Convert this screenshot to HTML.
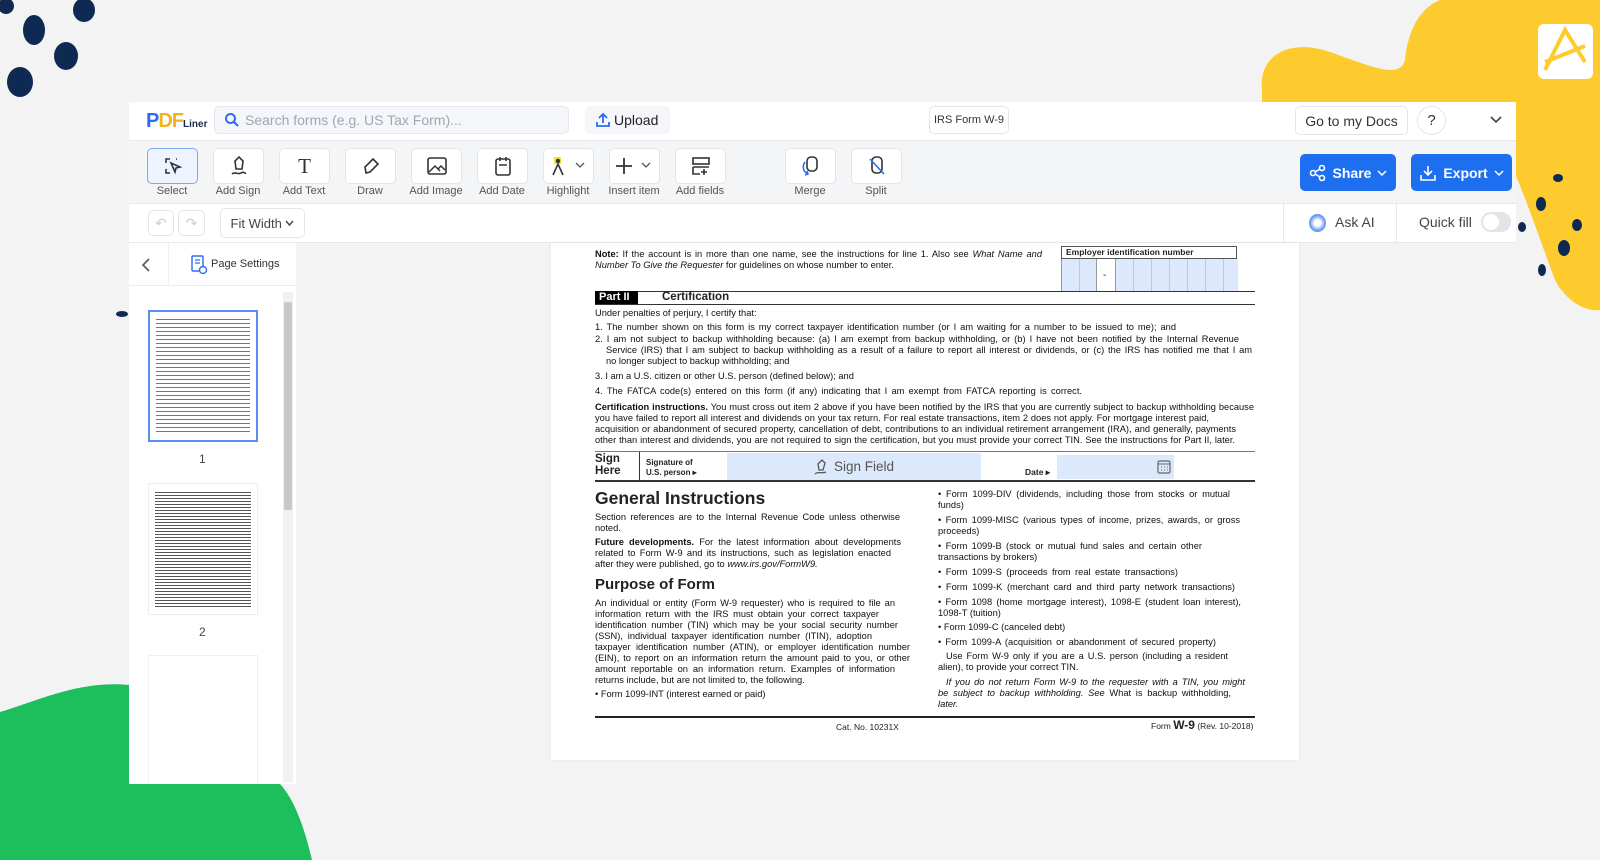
<!DOCTYPE html>
<html><head><meta charset="utf-8"><style>
*{box-sizing:border-box;margin:0;padding:0}
body{width:1600px;height:860px;overflow:hidden;background:#f3f3f4;font-family:"Liberation Sans",sans-serif;position:relative;color:#222}
.a{position:absolute}
.d{position:absolute;font-size:9.3px;line-height:11px;white-space:nowrap;color:#111}
.d div{height:11px}
.j{white-space:normal;text-align:justify;text-align-last:justify}
.tb{position:absolute;top:148px;width:51px;height:36px;border:1px solid #e3e5ea;border-radius:5px;background:#fff;display:flex;align-items:center;justify-content:center}
.tl{position:absolute;top:185px;width:80px;text-align:center;font-size:11px;color:#555}
.btn{position:absolute;border:1px solid #e3e5ea;border-radius:5px;background:#fff;display:flex;align-items:center;justify-content:center;color:#333}
b{font-weight:bold}
</style></head><body>
<svg class="a" style="left:0;top:0" width="1600" height="860">
<path d="M1262 90 C1258 55 1290 38 1330 52 C1370 66 1400 80 1405 60 C1408 30 1420 8 1440 0 L1600 0 L1600 310 C1585 312 1565 300 1555 280 C1540 240 1520 180 1500 140 L1262 110 Z" fill="#fdcb2e"/>
<rect x="1538" y="24" width="55" height="55" rx="6" fill="#fff"/>
<path d="M1545 70 L1565 30 L1585 62 M1545 62 L1585 46" stroke="#fdcb2e" stroke-width="4" fill="none"/>
<path d="M0 712 C40 700 80 680 130 685 L130 784 L280 784 C295 800 305 830 312 860 L0 860 Z" fill="#1dbf5c"/>
<g fill="#0e2a52">
<ellipse cx="34" cy="30" rx="11" ry="15"/><ellipse cx="84" cy="10" rx="11" ry="12"/><ellipse cx="66" cy="56" rx="12" ry="14"/><ellipse cx="20" cy="82" rx="13" ry="15"/><ellipse cx="6" cy="6" rx="8" ry="8"/>
<ellipse cx="1558" cy="178" rx="5" ry="4"/><ellipse cx="1541" cy="204" rx="5" ry="7"/><ellipse cx="1577" cy="225" rx="5" ry="6"/><ellipse cx="1564" cy="248" rx="6" ry="8"/><ellipse cx="1542" cy="270" rx="4" ry="6"/><ellipse cx="1522" cy="227" rx="4" ry="5"/><ellipse cx="122" cy="314" rx="6" ry="3"/>
</g>
</svg>
<div class="a" style="left:129px;top:102px;width:1387px;height:39px;background:#fff;border-bottom:1px solid #e8e9ec"></div>
<div class="a" style="left:146px;top:110px;font-size:20px;font-weight:bold;color:#2a6df4;letter-spacing:-1px">P<span style="color:#f5b21a">D</span><span style="color:#f5b21a">F</span><span style="font-size:10px;color:#1c2b4a;letter-spacing:0">Liner</span></div>
<div class="a" style="left:214px;top:106px;width:355px;height:28px;background:#f4f6fa;border:1px solid #e3e7ee;border-radius:5px"></div>
<svg class="a" style="left:224px;top:112px" width="16" height="16"><circle cx="6.5" cy="6.5" r="4.5" stroke="#2a6df4" stroke-width="2" fill="none"/><path d="M10 10 L14 14" stroke="#2a6df4" stroke-width="2"/></svg>
<div class="a" style="left:245px;top:112px;font-size:14px;color:#a0a6b2">Search forms (e.g. US Tax Form)...</div>
<div class="a" style="left:585px;top:106px;width:85px;height:28px;background:#f4f6fa;border-radius:5px"></div>
<svg class="a" style="left:594px;top:111px" width="18" height="18"><path d="M9 12 V3 M5 7 L9 3 L13 7 M3 11 V15 H15 V11" stroke="#2a6df4" stroke-width="1.8" fill="none"/></svg>
<div class="a" style="left:614px;top:112px;font-size:14px;color:#222">Upload</div>
<div class="btn" style="left:929px;top:106px;width:80px;height:28px;font-size:11px">IRS Form W-9</div>
<div class="btn" style="left:1295px;top:106px;width:113px;height:29px;font-size:14px">Go to my Docs</div>
<div class="btn" style="left:1417px;top:106px;width:29px;height:29px;border-radius:50%;font-size:15px">?</div>
<svg class="a" style="left:1489px;top:115px" width="14" height="10"><path d="M2 2 L7 7 L12 2" stroke="#444" stroke-width="1.6" fill="none"/></svg>
<div class="a" style="left:129px;top:141px;width:1387px;height:63px;background:#f4f5f7;border-bottom:1px solid #e8e9ec"></div>
<div class="tb" style="left:147px;border-color:#7fa6f0;background:#eef4ff"><svg width="20" height="20"><path d="M3 7V3h4M3 13v4h4M14 3h-1" stroke="#333" stroke-width="1.6" fill="none"/><path d="M8 7 L17 11 L13 12 L12 16 Z" stroke="#333" stroke-width="1.6" fill="none"/></svg></div>
<div class="tb" style="left:213px"><svg width="20" height="22"><path d="M7 14 L6 6 L10 2 L14 6 L13 14 Z M3 19 C6 16 9 20 12 18 S16 19 17 18" stroke="#333" stroke-width="1.6" fill="none"/></svg></div>
<div class="tb" style="left:279px;font-size:21px;font-family:'Liberation Serif',serif;color:#333">T</div>
<div class="tb" style="left:345px"><svg width="20" height="20"><path d="M5 17 L4 11 L12 3 L17 8 L9 16 Z M12 3 L15 6" stroke="#333" stroke-width="1.6" fill="none"/></svg></div>
<div class="tb" style="left:411px"><svg width="22" height="20"><rect x="2" y="2" width="18" height="16" rx="2" stroke="#333" stroke-width="1.6" fill="none"/><path d="M3 16 L9 10 L14 15 M12 13 L15 10 L19 14" stroke="#333" stroke-width="1.5" fill="none"/></svg></div>
<div class="tb" style="left:477px"><svg width="20" height="22"><rect x="3" y="4" width="14" height="16" rx="2" stroke="#333" stroke-width="1.6" fill="none"/><path d="M7 2v4M13 2v4M6 10h8" stroke="#333" stroke-width="1.6"/></svg></div>
<div class="tb" style="left:543px"><svg width="40" height="22"><rect x="5" y="2" width="7" height="7" fill="#f5e12a"/><circle cx="9" cy="6" r="2.2" fill="#333"/><path d="M4 20 L9 9 L14 20" stroke="#333" stroke-width="1.6" fill="none"/><path d="M27 8 L31 12 L35 8" stroke="#555" stroke-width="1.3" fill="none"/></svg></div>
<div class="tb" style="left:609px"><svg width="40" height="22"><path d="M9 3v16M1 11h16" stroke="#333" stroke-width="1.8"/><path d="M27 8 L31 12 L35 8" stroke="#555" stroke-width="1.3" fill="none"/></svg></div>
<div class="tb" style="left:675px"><svg width="22" height="22"><rect x="3" y="3" width="16" height="6" stroke="#333" stroke-width="1.6" fill="none"/><path d="M3 12h16M3 12v7h7M14 14v6M11 17h6" stroke="#333" stroke-width="1.6" fill="none"/></svg></div>
<div class="tb" style="left:785px"><svg width="22" height="24"><rect x="7" y="3" width="10" height="14" rx="4" stroke="#333" stroke-width="1.6" fill="none"/><path d="M5 8 C2 12 3 18 8 20 M5 21 L8 20 L7 17" stroke="#2a6df4" stroke-width="1.6" fill="none"/></svg></div>
<div class="tb" style="left:851px"><svg width="22" height="24"><rect x="6" y="3" width="10" height="16" rx="4" stroke="#333" stroke-width="1.6" fill="none"/><path d="M4 5 L18 20" stroke="#2a6df4" stroke-width="1.6"/></svg></div>
<div class="tl" style="left:132px">Select</div><div class="tl" style="left:198px">Add Sign</div><div class="tl" style="left:264px">Add Text</div><div class="tl" style="left:330px">Draw</div><div class="tl" style="left:396px">Add Image</div><div class="tl" style="left:462px">Add Date</div><div class="tl" style="left:528px">Highlight</div><div class="tl" style="left:594px">Insert item</div><div class="tl" style="left:660px">Add fields</div><div class="tl" style="left:770px">Merge</div><div class="tl" style="left:836px">Split</div>
<div class="a" style="left:1300px;top:154px;width:96px;height:37px;background:#1e6ff0;border-radius:5px;color:#fff;font-size:14px;font-weight:bold;display:flex;align-items:center;justify-content:center;gap:6px"><svg width="18" height="18"><circle cx="4" cy="9" r="2.5" stroke="#fff" stroke-width="1.6" fill="none"/><circle cx="13" cy="4" r="2.5" stroke="#fff" stroke-width="1.6" fill="none"/><circle cx="13" cy="14" r="2.5" stroke="#fff" stroke-width="1.6" fill="none"/><path d="M6 8 L11 5 M6 10 L11 13" stroke="#fff" stroke-width="1.5"/></svg>Share<svg width="10" height="8"><path d="M1 2 L5 6 L9 2" stroke="#fff" stroke-width="1.5" fill="none"/></svg></div>
<div class="a" style="left:1411px;top:154px;width:101px;height:37px;background:#1e6ff0;border-radius:5px;color:#fff;font-size:14px;font-weight:bold;display:flex;align-items:center;justify-content:center;gap:6px"><svg width="18" height="18"><path d="M9 2v9M5 7l4 4 4-4M2 11v5h14v-5" stroke="#fff" stroke-width="1.6" fill="none"/></svg>Export<svg width="10" height="8"><path d="M1 2 L5 6 L9 2" stroke="#fff" stroke-width="1.5" fill="none"/></svg></div>
<div class="a" style="left:129px;top:204px;width:1387px;height:39px;background:#fff;border-bottom:1px solid #e8e9ec"></div>
<div class="btn" style="left:148px;top:210px;width:26px;height:26px;color:#ccc;font-size:14px">↶</div>
<div class="btn" style="left:178px;top:210px;width:27px;height:26px;color:#ccc;font-size:14px">↷</div>
<div class="btn" style="left:220px;top:208px;width:85px;height:30px;font-size:13px;color:#444">Fit Width&nbsp;<svg width="9" height="7"><path d="M1 1 L4.5 5 L8 1" stroke="#444" stroke-width="1.4" fill="none"/></svg></div>
<div class="a" style="left:1283px;top:204px;width:1px;height:39px;background:#e8e9ec"></div>
<div class="a" style="left:1396px;top:204px;width:1px;height:39px;background:#e8e9ec"></div>
<div class="a" style="left:1309px;top:214px;width:17px;height:18px;border-radius:50%;background:radial-gradient(circle,#fff 25%,#6f9cf5 60%,#4a7ff0)"></div>
<div class="a" style="left:1335px;top:214px;font-size:14px;color:#444">Ask AI</div>
<div class="a" style="left:1419px;top:214px;font-size:14px;color:#444">Quick fill</div>
<div class="a" style="left:1481px;top:212px;width:30px;height:20px;border-radius:10px;background:#e3e4e8"><div style="margin:2px;width:16px;height:16px;border-radius:50%;background:#fff"></div></div>
<div class="a" style="left:129px;top:243px;width:167px;height:541px;background:#fff"></div>
<div class="a" style="left:129px;top:285px;width:167px;height:1px;background:#eee"></div>
<div class="a" style="left:168px;top:243px;width:1px;height:42px;background:#eee"></div>
<svg class="a" style="left:140px;top:257px" width="12" height="16"><path d="M9 2 L3 8 L9 14" stroke="#555" stroke-width="1.6" fill="none"/></svg>
<svg class="a" style="left:190px;top:255px" width="18" height="20"><rect x="2" y="1" width="11" height="15" rx="1" stroke="#2a6df4" stroke-width="1.4" fill="none"/><path d="M5 5h5M5 8h5" stroke="#2a6df4" stroke-width="1.2"/><circle cx="13" cy="15" r="3.5" stroke="#2a6df4" stroke-width="1.4" fill="#fff"/></svg>
<div class="a" style="left:211px;top:258px;font-size:11px;color:#333">Page Settings</div>
<div class="a" style="left:283px;top:292px;width:10px;height:490px;background:#f1f1f1"></div>
<div class="a" style="left:284px;top:302px;width:8px;height:208px;background:#c8c8c8;border-radius:2px"></div>
<div class="a" style="left:148px;top:310px;width:110px;height:132px;border:2px solid #5b8ef2;background:repeating-linear-gradient(#fff 0 3px,#777 3px 4px);background-clip:content-box;padding:6px"></div>
<div class="a" style="left:199px;top:452px;font-size:12px;color:#444">1</div>
<div class="a" style="left:148px;top:483px;width:110px;height:132px;border:1px solid #eee;padding:6px;background:repeating-linear-gradient(#fff 0 2px,#555 2px 3px);background-clip:content-box"></div>
<div class="a" style="left:199px;top:625px;font-size:12px;color:#444">2</div>
<div class="a" style="left:148px;top:655px;width:110px;height:129px;border:1px solid #f0f0f0;border-bottom:none"></div>
<div class="a" style="left:551px;top:243px;width:748px;height:517px;background:#fff;box-shadow:0 0 4px rgba(0,0,0,.06)"></div>
<div class="d" style="left:595px;top:249px"><div class="j" style="width:447px"><b>Note:</b> If the account is in more than one name, see the instructions for line 1. Also see <i>What Name and</i></div><div><i>Number To Give the Requester</i> for guidelines on whose number to enter.</div></div>
<div class="a" style="left:1061px;top:246px;width:176px;height:13px;border:1px solid #555;font-size:8.5px;font-weight:bold;padding-left:4px;line-height:11px">Employer identification number</div>
<div class="a" style="left:1061px;top:259px;width:36px;height:33px;background:#dce8fb;border-left:1px solid #999;border-right:1px solid #999;background-image:linear-gradient(90deg,transparent 17px,#b8c8e6 17px 18px,transparent 18px)"></div>
<div class="a" style="left:1103px;top:270px;font-size:10px">-</div>
<div class="a" style="left:1115px;top:259px;width:123px;height:33px;background:#dce8fb;border-left:1px solid #999;background-image:repeating-linear-gradient(90deg,transparent 0 17px,#b8c8e6 17px 18px)"></div>
<div class="a" style="left:595px;top:291px;width:660px;height:1px;background:#333"></div>
<div class="a" style="left:595px;top:304px;width:660px;height:1px;background:#333"></div>
<div class="a" style="left:595px;top:291px;width:43px;height:13px;background:#000;color:#fff;font-size:11px;font-weight:bold;padding-left:4px;line-height:13px">Part II</div>
<div class="a" style="left:662px;top:291px;font-size:11.5px;font-weight:bold;line-height:13px">Certification</div>
<div class="d" style="left:595px;top:308px">Under penalties of perjury, I certify that:</div>
<div class="d" style="left:595px;top:322px"><div class="j" style="width:581px">1. The number shown on this form is my correct taxpayer identification number (or I am waiting for a number to be issued to me); and</div></div>
<div class="d" style="left:595px;top:334px"><div class="j" style="width:644px">2. I am not subject to backup withholding because: (a) I am exempt from backup withholding, or (b) I have not been notified by the Internal Revenue</div><div class="j" style="width:646px;margin-left:11px">Service (IRS) that I am subject to backup withholding as a result of a failure to report all interest or dividends, or (c) the IRS has notified me that I am</div><div style="margin-left:11px">no longer subject to backup withholding; and</div></div>
<div class="d" style="left:595px;top:371px">3. I am a U.S. citizen or other U.S. person (defined below); and</div>
<div class="d" style="left:595px;top:386px"><div class="j" style="width:487px">4. The FATCA code(s) entered on this form (if any) indicating that I am exempt from FATCA reporting is correct.</div></div>
<div class="d" style="left:595px;top:402px"><div class="j" style="width:659px"><b>Certification instructions.</b> You must cross out item 2 above if you have been notified by the IRS that you are currently subject to backup withholding because</div><div class="j" style="width:614px">you have failed to report all interest and dividends on your tax return. For real estate transactions, item 2 does not apply. For mortgage interest paid,</div><div class="j" style="width:641px">acquisition or abandonment of secured property, cancellation of debt, contributions to an individual retirement arrangement (IRA), and generally, payments</div><div class="j" style="width:640px">other than interest and dividends, you are not required to sign the certification, but you must provide your correct TIN. See the instructions for Part II, later.</div></div>
<div class="a" style="left:595px;top:451px;width:660px;height:1px;background:#777"></div>
<div class="a" style="left:595px;top:480px;width:660px;height:2px;background:#333"></div>
<div class="a" style="left:639px;top:452px;width:1px;height:28px;background:#333"></div>
<div class="a" style="left:595px;top:453px;font-size:11.5px;font-weight:bold;line-height:12px">Sign<br>Here</div>
<div class="a" style="left:646px;top:458px;font-size:8px;font-weight:bold;line-height:10px">Signature of<br>U.S. person ▸</div>
<div class="a" style="left:727px;top:453px;width:254px;height:27px;background:#dce8fb;display:flex;align-items:center;justify-content:center;font-size:13.5px;color:#555;gap:6px"><svg width="14" height="16"><path d="M5 11 L4 5 L8 1 L11 4 L9 11 Z M1 15 C4 12 7 15 12 13" stroke="#555" stroke-width="1.3" fill="none"/></svg>Sign Field</div>
<div class="a" style="left:1025px;top:467px;font-size:8.5px;font-weight:bold">Date ▸</div>
<div class="a" style="left:1057px;top:455px;width:117px;height:24px;background:#dce8fb"></div>
<svg class="a" style="left:1157px;top:459px" width="14" height="15"><rect x="1" y="2" width="12" height="12" rx="1.5" stroke="#666" stroke-width="1.2" fill="none"/><path d="M1 5h12M4 8h1M7 8h1M10 8h1M4 11h1M7 11h1M10 11h1" stroke="#666" stroke-width="1"/></svg>
<div class="a" style="left:595px;top:488px;font-size:17.5px;font-weight:bold">General Instructions</div>
<div class="d" style="left:595px;top:512px"><div class="j" style="width:305px">Section references are to the Internal Revenue Code unless otherwise</div><div>noted.</div></div>
<div class="d" style="left:595px;top:537px"><div class="j" style="width:306px"><b>Future developments.</b> For the latest information about developments</div><div class="j" style="width:296px">related to Form W-9 and its instructions, such as legislation enacted</div><div>after they were published, go to <i>www.irs.gov/FormW9.</i></div></div>
<div class="a" style="left:595px;top:576px;font-size:15px;font-weight:bold">Purpose of Form</div>
<div class="d" style="left:595px;top:598px"><div class="j" style="width:300px">An individual or entity (Form W-9 requester) who is required to file an</div><div class="j" style="width:284px">information return with the IRS must obtain your correct taxpayer</div><div class="j" style="width:303px">identification number (TIN) which may be your social security number</div><div class="j" style="width:277px">(SSN), individual taxpayer identification number (ITIN), adoption</div><div class="j" style="width:315px">taxpayer identification number (ATIN), or employer identification number</div><div class="j" style="width:315px">(EIN), to report on an information return the amount paid to you, or other</div><div class="j" style="width:300px">amount reportable on an information return. Examples of information</div><div>returns include, but are not limited to, the following.</div></div>
<div class="d" style="left:595px;top:689px">• Form 1099-INT (interest earned or paid)</div>
<div class="d" style="left:938px;top:489px"><div class="j" style="width:292px">• Form 1099-DIV (dividends, including those from stocks or mutual</div><div>funds)</div></div>
<div class="d" style="left:938px;top:515px"><div class="j" style="width:302px">• Form 1099-MISC (various types of income, prizes, awards, or gross</div><div>proceeds)</div></div>
<div class="d" style="left:938px;top:541px"><div class="j" style="width:264px">• Form 1099-B (stock or mutual fund sales and certain other</div><div>transactions by brokers)</div></div>
<div class="d" style="left:938px;top:567px"><div class="j" style="width:240px">• Form 1099-S (proceeds from real estate transactions)</div></div>
<div class="d" style="left:938px;top:582px"><div class="j" style="width:297px">• Form 1099-K (merchant card and third party network transactions)</div></div>
<div class="d" style="left:938px;top:597px"><div class="j" style="width:303px">• Form 1098 (home mortgage interest), 1098-E (student loan interest),</div><div>1098-T (tuition)</div></div>
<div class="d" style="left:938px;top:622px">• Form 1099-C (canceled debt)</div>
<div class="d" style="left:938px;top:637px"><div class="j" style="width:278px">• Form 1099-A (acquisition or abandonment of secured property)</div></div>
<div class="d" style="left:938px;top:651px"><div class="j" style="width:282px;margin-left:8px">Use Form W-9 only if you are a U.S. person (including a resident</div><div>alien), to provide your correct TIN.</div></div>
<div class="d" style="left:938px;top:677px"><div class="j" style="width:299px;margin-left:8px"><i>If you do not return Form W-9 to the requester with a TIN, you might</i></div><div class="j" style="width:293px"><i>be subject to backup withholding. See</i> What is backup withholding,</div><div><i>later.</i></div></div>
<div class="a" style="left:595px;top:716px;width:660px;height:2px;background:#222"></div>
<div class="a" style="left:836px;top:722px;font-size:8.5px">Cat. No. 10231X</div>
<div class="a" style="left:1151px;top:718px;font-size:8.5px">Form <b style="font-size:12px">W-9</b> (Rev. 10-2018)</div>
</body></html>
